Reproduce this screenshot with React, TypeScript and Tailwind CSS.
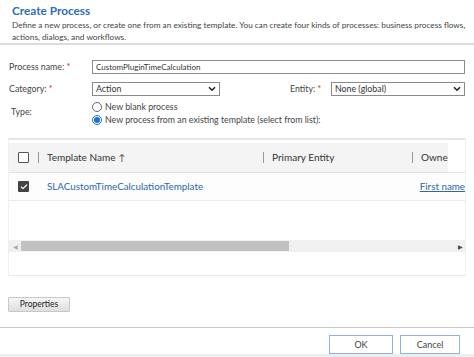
import { Check } from 'lucide-react';

export default function App() {
  return (
    <div
      className="w-[474px] h-[357px] bg-white overflow-hidden flex flex-col text-[#333]"
      style={{ fontFamily: 'Lato, "Open Sans", sans-serif' }}
    >
      {/* Header */}
      <div className="pl-3 pr-1 pt-[3px] h-[45px] border-b-2 border-[#dcdcdc]">
        <div className="text-[11.8px] font-bold text-[#2f6dbd] leading-[15px]">Create Process</div>
        <p className="mt-[1px] text-[8.25px] leading-[12px] text-[#444] whitespace-nowrap">
          Define a new process, or create one from an existing template. You can create four kinds of processes: business process flows,
          <br />
          actions, dialogs, and workflows.
        </p>
      </div>

      {/* Form */}
      <div className="px-[9px] pt-[15px] text-[8.8px] text-[#444]">
        <div className="flex items-center h-[14px]">
          <div className="w-[83px]">
            Process name: <span className="text-[#c0282d]">*</span>
          </div>
          <div className="flex-1 h-[14px] border border-[#8a8a8a] px-[3px] leading-[12px] text-[8px] text-[#333]">
            CustomPluginTimeCalculation
          </div>
        </div>

        <div className="flex items-center h-[14px] mt-[8px]">
          <div className="w-[83px]">
            Category: <span className="text-[#c0282d]">*</span>
          </div>
          <div className="w-[128px] h-[14px] border border-[#8a8a8a] px-[3px] flex items-center justify-between text-[#333]">
            <span>Action</span>
            <Chevron />
          </div>
          <div className="w-[70px]" />
          <div className="w-[41px]">
            Entity: <span className="text-[#c0282d]">*</span>
          </div>
          <div className="flex-1 h-[14px] border border-[#8a8a8a] px-[3px] flex items-center justify-between text-[#333]">
            <span>None (global)</span>
            <Chevron />
          </div>
        </div>

        <div className="flex mt-[5px]">
          <div className="w-[83px] pl-[2px] pt-[4px]">Type:</div>
          <div className="flex flex-col gap-[1px]">
            <label className="flex items-center gap-[3px] h-[12px]">
              <span className="w-[10px] h-[10px] rounded-full border border-[#666] bg-white" />
              New blank process
            </label>
            <label className="flex items-center gap-[3px] h-[12px]">
              <span className="w-[10px] h-[10px] rounded-full border border-[#1a73d9] bg-white flex items-center justify-center">
                <span className="w-[6px] h-[6px] rounded-full bg-[#1a73d9]" />
              </span>
              New process from an existing template (select from list):
            </label>
          </div>
        </div>
      </div>

      {/* Grid */}
      <div className="mx-[8px] mt-[12px] h-[145px] pt-[3px] border-t-2 border-[#e4e4e4] border-b border-x border-x-[#f0f0f0] border-b-[#e8e8e8] flex flex-col text-[10px]">
        <div className="h-[30px] shrink-0 bg-[#f4f4f4] flex items-center border-b border-[#e3e3e3] text-[#333]">
          <div className="w-[29px] pl-[9px]">
            <span className="block w-[11px] h-[11px] border border-[#555] bg-white rounded-[1px]" />
          </div>
          <div className="w-[1px] h-[11px] bg-[#999]" />
          <div className="w-[224px] pl-[8px] flex items-center gap-[3px]">
            Template Name <span className="text-[9px]">↑</span>
          </div>
          <div className="w-[1px] h-[11px] bg-[#999]" />
          <div className="w-[148px] pl-[8px]">Primary Entity</div>
          <div className="w-[1px] h-[11px] bg-[#999]" />
          <div className="w-[35px] pl-[8px] overflow-hidden whitespace-nowrap">Owner</div>
          <div className="flex-1 h-full bg-white" />
        </div>
        <div className="h-[28px] shrink-0 flex items-center border-b border-[#ececec] bg-[#fdfdfd] text-[9.8px]">
          <div className="w-[29px] pl-[9px]">
            <span className="flex w-[11px] h-[11px] bg-[#444] rounded-[1px] items-center justify-center">
              <Check size={8} strokeWidth={3.5} className="text-white" />
            </span>
          </div>
          <div className="w-[226px] pl-[9px] text-[#2b66b3]">SLACustomTimeCalculationTemplate</div>
          <div className="w-[149px]" />
          <div className="pl-[7px] text-[#2b66b3] underline whitespace-nowrap">First name</div>
        </div>
        <div className="h-[39px] shrink-0" />
        <div className="h-[12px] shrink-0 bg-[#f0f0f0] flex items-center">
          <div className="w-[12px] flex justify-center text-[#aaa] text-[6px]">◀</div>
          <div className="w-[268px] h-[10px] bg-[#c1c1c1]" />
          <div className="flex-1" />
          <div className="w-[10px] flex justify-center text-[#444] text-[6px]">▶</div>
        </div>
        <div className="flex-1" />
      </div>

      {/* Properties */}
      <div className="px-[8px] mt-[13px]">
        <button className="w-[62px] h-[15px] text-[8.5px] text-[#222] border border-[#c8c8c8] bg-gradient-to-b from-[#f6f6f6] to-[#dedede] rounded-[1px]">
          Properties
        </button>
      </div>

      {/* Footer */}
      <div className="mt-[14px] border-t border-[#c8c8c8] flex justify-end gap-[7px] pr-[14px] pt-[7px]">
        <button className="w-[64px] h-[19px] border border-[#8fb3d9] text-[9px] text-[#444] bg-white">OK</button>
        <button className="w-[60px] h-[19px] border border-[#8fb3d9] text-[9px] text-[#444] bg-white">Cancel</button>
      </div>
      <div className="mt-auto h-[3px] bg-[#eeeeee]" />
    </div>
  );
}

function Chevron() {
  return (
    <svg width="8" height="6" viewBox="0 0 8 6" fill="none">
      <path d="M1 1.2 L4 4.2 L7 1.2" stroke="#222" strokeWidth="1.6" />
    </svg>
  );
}
